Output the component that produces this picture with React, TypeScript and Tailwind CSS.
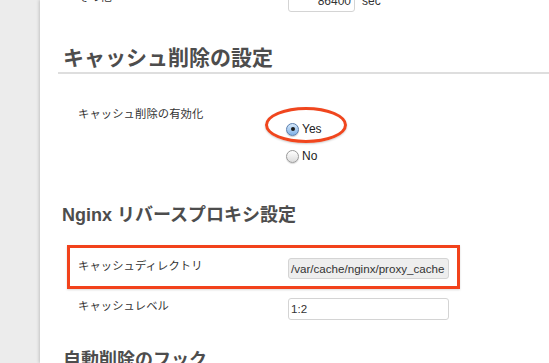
import React from "react";

const font = { fontFamily: '"Liberation Sans", "Noto Sans CJK JP", sans-serif' };

const Radio = ({ checked, label }: { checked?: boolean; label: string }) => (
  <label className="flex h-[24px] items-center gap-[3px] text-[12px] text-[#222]">
    <span
      className={
        checked
          ? "flex h-[13px] w-[13px] shrink-0 items-center justify-center rounded-full border border-[#5b7fae] bg-gradient-to-b from-[#d6e9fb] to-[#7fb1e6] shadow-[0_1px_1px_rgba(0,0,0,0.2)]"
          : "flex h-[13px] w-[13px] shrink-0 items-center justify-center rounded-full border border-[#9a9a9a] bg-gradient-to-b from-[#ffffff] to-[#dcdcdc] shadow-[0_1px_1px_rgba(0,0,0,0.15)]"
      }
    >
      {checked && <span className="h-[4px] w-[4px] rounded-full bg-[#1a1a1a]" />}
    </span>
    {label}
  </label>
);

const FieldRow = ({
  label,
  value,
  disabled,
  boxed,
}: {
  label: string;
  value: string;
  disabled?: boolean;
  boxed?: boolean;
}) => (
  <div
    className={
      boxed
        ? "ml-[27px] flex w-[393px] items-start border-[3px] border-[#f2421b] pl-[8px] pt-[10px] pb-[7px] shadow-[0_1px_2px_rgba(0,0,0,0.15)]"
        : "ml-[27px] flex w-[393px] items-start border-[3px] border-transparent pl-[8px] pt-[6px] pb-[7px]"
    }
  >
    <span className="w-[210px] text-[11.3px] leading-[16px] tracking-[0.1px] text-[#333]">{label}</span>
    <div
      className={
        disabled
          ? "flex h-[21px] w-[161px] items-center overflow-hidden rounded-[3px] border border-[#d4d4d4] bg-[#eeeeee] px-[2px] text-[11.6px] whitespace-nowrap text-[#333]"
          : "flex h-[22px] w-[161px] items-center overflow-hidden rounded-[3px] border border-[#d4d4d4] bg-white px-[2px] text-[11.6px] whitespace-nowrap text-[#333]"
      }
    >
      {value}
    </div>
  </div>
);

export default function App() {
  return (
    <div className="flex h-[363px] w-[549px] overflow-hidden bg-[#ececec]" style={font}>
      <div className="w-[40px] shrink-0 bg-[#ececec]" />
      <div className="relative flex-1 bg-white shadow-[-1px_0_3px_rgba(0,0,0,0.18)]">
        {/* top row, mostly scrolled away */}
        <div className="mt-[-11px] flex h-[23px] items-center pl-[38px]">
          <span className="mt-[-6px] w-[210px] text-[11.3px] text-[#333]">その他</span>
          <div className="flex h-[23px] w-[67px] items-center justify-end rounded-[3px] border border-[#d4d4d4] px-[3px] text-[12px] text-[#333]">
            86400
          </div>
          <span className="ml-[7px] text-[12px] text-[#333]">sec</span>
        </div>

        <h1 className="mt-[33px] ml-[18px] border-b-2 border-[#dedede] pb-[2px] pl-[5px] text-[21px] leading-[25px] font-bold text-[#4d4d4d]">
          キャッシュ削除の設定
        </h1>

        <div className="mt-[32px] flex pl-[38px]">
          <span className="w-[208px] text-[11.3px] leading-[16px] tracking-[0.1px] text-[#333]">
            キャッシュ削除の有効化
          </span>
          <div className="mt-[11px] flex flex-col gap-[3px]">
            <Radio checked label="Yes" />
            <Radio label="No" />
          </div>
        </div>

        <h2 className="mt-[36px] ml-[22px] text-[18px] leading-[22px] font-bold text-[#4d4d4d]">
          Nginx リバースプロキシ設定
        </h2>

        <div className="mt-[19px]">
          <FieldRow boxed disabled label="キャッシュディレクトリ" value="/var/cache/nginx/proxy_cache" />
          <FieldRow label="キャッシュレベル" value="1:2" />
        </div>

        <h2 className="mt-[19px] ml-[23px] text-[18px] leading-[22px] font-bold text-[#4d4d4d]">
          自動削除のフック
        </h2>

        {/* annotation ellipse */}
        <div className="pointer-events-none absolute left-[225px] top-[107px] h-[36px] w-[82px] rounded-[50%] border-[3px] border-[#f0461e] shadow-[0_1px_2px_rgba(0,0,0,0.2)]" />
      </div>
    </div>
  );
}
